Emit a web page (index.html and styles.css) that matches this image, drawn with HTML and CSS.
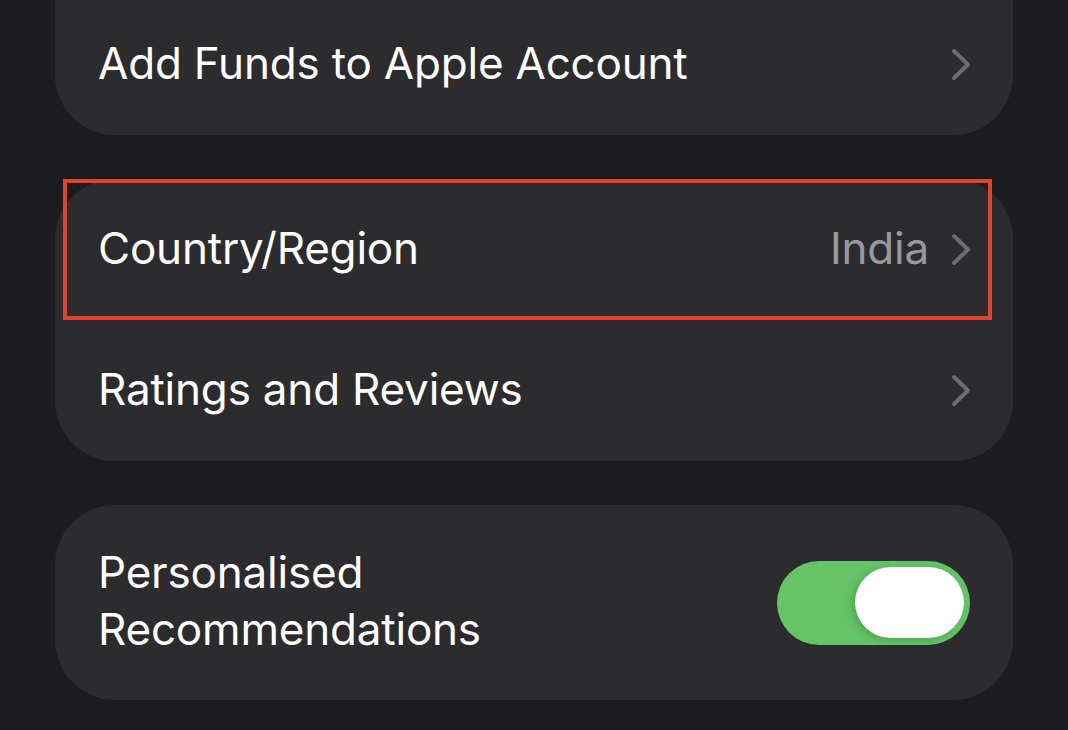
FILE: index.html
```
<!DOCTYPE html>
<html lang="en">
  <head>
    <meta charset="UTF-8" />
    <meta name="viewport" content="width=device-width, initial-scale=1.0" />
    <title>Account Settings</title>
    <link rel="stylesheet" href="styles.css">
  </head>
  <body>
    <div class="page">
      <div class="group group-top">
        <div class="row">
          <span class="label">Add Funds to Apple Account</span>
          <span class="accessory">
            <svg class="chevron" viewBox="0 0 20 33"><polyline points="3,3 17,16.5 3,30" /></svg>
          </span>
        </div>
      </div>

      <div class="group group-region">
        <div class="row">
          <span class="label">Country/Region</span>
          <span class="accessory">
            <span class="value">India</span>
            <svg class="chevron" viewBox="0 0 20 33"><polyline points="3,3 17,16.5 3,30" /></svg>
          </span>
        </div>
        <div class="row">
          <span class="label">Ratings and Reviews</span>
          <span class="accessory">
            <svg class="chevron" viewBox="0 0 20 33"><polyline points="3,3 17,16.5 3,30" /></svg>
          </span>
        </div>
        <div class="highlight"></div>
      </div>

      <div class="group">
        <div class="row row-tall">
          <span class="label">Personalised<br>Recommendations</span>
          <span class="toggle on"><span class="knob"></span></span>
        </div>
      </div>
    </div>
  </body>
</html>
```

FILE: styles.css
```
body {
  margin: 0;
  background-color: #1c1c1e;
  font-family: "Inter", "Liberation Sans", sans-serif;
  color: #fff;
  overflow: hidden;
}

.page {
  display: flex;
  flex-direction: column;
  gap: 44px;
  padding: 0 55px;
}

.group {
  position: relative;
  background-color: #2c2c2e;
  border-radius: 60px;
}

.group-top {
  margin-top: -6px;
  border-top-left-radius: 0;
  border-top-right-radius: 0;
}

.row {
  display: flex;
  align-items: center;
  justify-content: space-between;
  height: 141px;
  padding: 0 42px 0 43px;
}

.row-tall {
  height: 195px;
  padding-right: 43px;
}

.label {
  font-size: 44px;
  line-height: 57px;
  letter-spacing: -0.2px;
  padding-bottom: 3px;
}

.accessory {
  display: flex;
  align-items: center;
  gap: 22px;
}

.value {
  color: #98989e;
  font-size: 44px;
  line-height: 57px;
  letter-spacing: -0.2px;
  padding-bottom: 3px;
}

.chevron {
  width: 20px;
  height: 33px;
  fill: none;
  stroke: #6b6b70;
  stroke-width: 4;
  stroke-linecap: round;
  stroke-linejoin: round;
}

.highlight {
  position: absolute;
  left: 8px;
  top: 0;
  width: 929px;
  height: 141px;
  box-sizing: border-box;
  border: 4px solid #e4432b;
}

.toggle {
  display: flex;
  justify-content: flex-end;
  align-items: center;
  width: 193px;
  height: 84px;
  box-sizing: border-box;
  padding: 0 6px;
  border-radius: 42px;
  background-color: #65c466;
}

.knob {
  width: 109px;
  height: 71px;
  border-radius: 36px;
  background-color: #fff;
  box-shadow: -3px 2px 8px rgba(0, 0, 0, 0.18);
}
```
